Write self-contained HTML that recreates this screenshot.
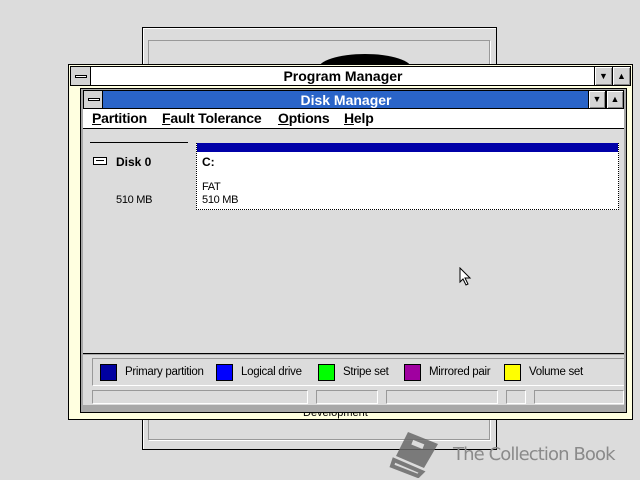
<!DOCTYPE html>
<html><head><style>
*{margin:0;padding:0;box-sizing:border-box}
body{width:640px;height:480px;background:#dcdcdc;position:relative;overflow:hidden;font-family:"Liberation Sans",sans-serif}
div{position:absolute;white-space:nowrap}
.b{font-weight:bold}
.btn{background:#d4d4d4;border:1px solid #000;box-shadow:inset 1px 1px #fff,inset -1px -1px #888}
.sq{width:17px;height:17px;border:1px solid #000;top:364px}
.lt{top:366px;font-size:11.5px;letter-spacing:-0.3px;color:#000}
.pane{top:390px;height:14px;border:1px solid #999;border-right-color:#fff;border-bottom-color:#fff}
</style></head><body>
<div style="left:142px;top:27px;width:355px;height:423px;background:#dcdcdc;border:1px solid #000;box-shadow:inset 1px 1px #fff"></div>
<div style="left:148px;top:40px;width:342px;height:400px;border:1px solid #999;box-shadow:1px 1px #fff"></div>
<div style="left:318px;top:54px;width:94px;height:30px;background:#000;border-radius:50%"></div>
<div style="left:68px;top:64px;width:565px;height:356px;background:#ffffe0;border:1px solid #000"></div>
<div style="left:70px;top:66px;width:561px;height:20px;background:#fff;border:1px solid #000"></div>
<div style="left:70px;top:66px;width:21px;height:20px;border:1px solid #000;background:#d4d4d4"><div style="left:4px;top:8px;width:12px;height:3px;border:1px solid #000;background:#fff"></div></div>
<div style="left:90px;top:68px;width:506px;text-align:center;font-size:14px" class="b">Program Manager</div>
<div class="btn" style="left:594px;top:66px;width:19px;height:20px;font-size:9px;text-align:center;line-height:18px">▼</div>
<div class="btn" style="left:612px;top:66px;width:19px;height:20px;font-size:9px;text-align:center;line-height:18px">▲</div>
<div style="left:303px;top:407px;font-size:11px">Development</div>
<div style="left:80px;top:88px;width:547px;height:325px;background:#a8a8a8;border:1px solid #000"></div>
<div style="left:83px;top:90px;width:541px;height:19px;background:#2a64c8;border:1px solid #000"></div>
<div style="left:83px;top:90px;width:20px;height:19px;border:1px solid #000;background:#d4d4d4"><div style="left:4px;top:7px;width:12px;height:3px;border:1px solid #000;background:#fff"></div></div>
<div class="b" style="left:103px;top:92px;width:486px;text-align:center;font-size:14px;color:#fff">Disk Manager</div>
<div class="btn" style="left:588px;top:90px;width:18px;height:19px;font-size:9px;text-align:center;line-height:17px">▼</div>
<div class="btn" style="left:606px;top:90px;width:18px;height:19px;font-size:9px;text-align:center;line-height:17px">▲</div>
<div style="left:83px;top:109px;width:541px;height:20px;background:#fff;border-bottom:1px solid #000"></div>
<div class="b" style="left:92px;top:110px;font-size:14px;letter-spacing:-0.2px"><u>P</u>artition</div>
<div class="b" style="left:162px;top:110px;font-size:14px;letter-spacing:-0.2px"><u>F</u>ault Tolerance</div>
<div class="b" style="left:278px;top:110px;font-size:14px;letter-spacing:-0.2px"><u>O</u>ptions</div>
<div class="b" style="left:344px;top:110px;font-size:14px;letter-spacing:-0.2px"><u>H</u>elp</div>
<div style="left:83px;top:129px;width:541px;height:225px;background:#dcdcdc;border-bottom:1px solid #000"></div>
<div style="left:90px;top:142px;width:98px;height:1px;background:#000"></div>
<div style="left:93px;top:157px;width:14px;height:8px;border:1px solid #000;background:#fff"><div style="left:2px;top:2px;width:8px;height:1px;background:#000"></div></div>
<div class="b" style="left:116px;top:155px;font-size:12px">Disk 0</div>
<div style="left:116px;top:194px;font-size:11px;letter-spacing:-0.3px">510 MB</div>
<div style="left:196px;top:143px;width:423px;height:67px;background:#fff;border:1px dotted #000"></div>
<div style="left:197px;top:143px;width:421px;height:9px;background:#0000a8"></div>
<div class="b" style="left:202px;top:155px;font-size:12px">C:</div>
<div style="left:202px;top:181px;font-size:11px;letter-spacing:-0.3px">FAT</div>
<div style="left:202px;top:194px;font-size:11px;letter-spacing:-0.3px">510 MB</div>
<div style="left:83px;top:355px;width:541px;height:50px;background:#dcdcdc"></div>
<div style="left:92px;top:358px;width:532px;height:28px;border:1px solid #999;border-right:none;border-bottom-color:#fff"></div>
<div class="sq" style="left:100px;background:#0000a0"></div><div class="lt" style="left:125px">Primary partition</div>
<div class="sq" style="left:216px;background:#0000ff"></div><div class="lt" style="left:241px">Logical drive</div>
<div class="sq" style="left:318px;background:#00ff00"></div><div class="lt" style="left:343px">Stripe set</div>
<div class="sq" style="left:404px;background:#a000a0"></div><div class="lt" style="left:429px">Mirrored pair</div>
<div class="sq" style="left:504px;background:#ffff00"></div><div class="lt" style="left:529px">Volume set</div>
<div class="pane" style="left:92px;width:216px"></div>
<div class="pane" style="left:316px;width:62px"></div>
<div class="pane" style="left:386px;width:112px"></div>
<div class="pane" style="left:506px;width:20px"></div>
<div class="pane" style="left:534px;width:90px"></div>
<svg style="position:absolute;left:388px;top:430px" width="56" height="48" viewBox="0 0 56 48">
<g fill="#6a6a6a" opacity=".85"><path d="M20 2 L50 14 L36 38 L8 26 Z"/><path d="M6 30 L34 42 L30 46 L4 36 Z" fill="none" stroke="#6a6a6a" stroke-width="4"/></g>
<rect x="24" y="12" width="12" height="5" fill="#dcdcdc" transform="rotate(22 30 14)"/>
</svg>
<div style="left:453px;top:444px;font-size:18px;letter-spacing:-0.9px;color:#8a8a8a;font-family:'DejaVu Sans',sans-serif">The Collection Book</div>
<svg style="position:absolute;left:459px;top:267px" width="14" height="20"><path d="M1 1 L1 15 L4 12 L7 18 L9 17 L6 11 L11 11 Z" fill="#fff" stroke="#000"/></svg>
</body></html>
